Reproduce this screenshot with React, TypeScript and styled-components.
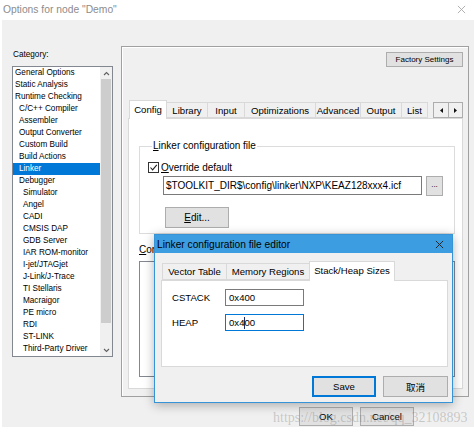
import React from "react";
import styled, { createGlobalStyle } from "styled-components";

const categories: { name: string; level: number }[] = [
  { name: "General Options", level: 0 },
  { name: "Static Analysis", level: 0 },
  { name: "Runtime Checking", level: 0 },
  { name: "C/C++ Compiler", level: 1 },
  { name: "Assembler", level: 1 },
  { name: "Output Converter", level: 1 },
  { name: "Custom Build", level: 1 },
  { name: "Build Actions", level: 1 },
  { name: "Linker", level: 1 },
  { name: "Debugger", level: 1 },
  { name: "Simulator", level: 2 },
  { name: "Angel", level: 2 },
  { name: "CADI", level: 2 },
  { name: "CMSIS DAP", level: 2 },
  { name: "GDB Server", level: 2 },
  { name: "IAR ROM-monitor", level: 2 },
  { name: "I-jet/JTAGjet", level: 2 },
  { name: "J-Link/J-Trace", level: 2 },
  { name: "TI Stellaris", level: 2 },
  { name: "Macraigor", level: 2 },
  { name: "PE micro", level: 2 },
  { name: "RDI", level: 2 },
  { name: "ST-LINK", level: 2 },
  { name: "Third-Party Driver", level: 2 },
];

// widths measured off the screenshot (tabs overlap by 1px)
const linkerTabs = [
  { label: "Config", w: 38 },
  { label: "Library", w: 42 },
  { label: "Input", w: 38 },
  { label: "Optimizations", w: 72 },
  { label: "Advanced", w: 46 },
  { label: "Output", w: 42 },
  { label: "List", w: 27 },
];

const editorTabs = [
  { label: "Vector Table", w: 65 },
  { label: "Memory Regions", w: 84 },
  { label: "Stack/Heap Sizes", w: 86 },
];

const CloseIcon = ({ color, size }: { color: string; size: number }) => (
  <svg width={size} height={size} viewBox="0 0 10 10">
    <path d="M1 1 L9 9 M9 1 L1 9" stroke={color} strokeWidth="1" fill="none" />
  </svg>
);

const Chevron = ({ up }: { up?: boolean }) => (
  <svg width="7" height="5" viewBox="0 0 7 5">
    <path
      d={up ? "M1 4 L3.5 1.5 L6 4" : "M1 1 L3.5 3.5 L6 1"}
      stroke="#606060"
      strokeWidth="1.1"
      fill="none"
    />
  </svg>
);

const App = () => {
  return (
    <Screen>
      <GlobalStyle />
      <TitleBar>
        <span>Options for node "Demo"</span>
        <CloseIcon color="#a8a8a8" size={9} />
      </TitleBar>
      <WindowBody>
        <MainRow>
          <LeftColumn>
            <CategoryLabel>Category:</CategoryLabel>
            <CategoryList>
              <Items>
                {categories.map((c) => (
                  <Item key={c.name} $level={c.level} $selected={c.name === "Linker"}>
                    {c.name}
                  </Item>
                ))}
              </Items>
              <ScrollBar>
                <ScrollArrow>
                  <Chevron up />
                </ScrollArrow>
                <Thumb $height={244} />
                <ScrollSpacer />
                <ScrollArrow>
                  <Chevron />
                </ScrollArrow>
              </ScrollBar>
            </CategoryList>
          </LeftColumn>

          <PageFrame>
            <FrameTop>
              <FactoryButton>Factory Settings</FactoryButton>
            </FrameTop>
            <TabStrip $height={18}>
              {linkerTabs.map((t, i) => (
                <Tab key={t.label} $w={t.w} $selected={i === 0} $h={16}>
                  {t.label}
                </Tab>
              ))}
              <Spin>
                <SpinButton>
                  <svg width="3" height="5" viewBox="0 0 3 5">
                    <polygon points="3,0 0,2.5 3,5" fill="#111" />
                  </svg>
                </SpinButton>
                <SpinButton>
                  <svg width="3" height="5" viewBox="0 0 3 5">
                    <polygon points="0,0 3,2.5 0,5" fill="#111" />
                  </svg>
                </SpinButton>
              </Spin>
            </TabStrip>
            <TabPane>
              <Group>
                <legend>
                  <u>L</u>inker configuration file
                </legend>
                <CheckRow>
                  <CheckBox>
                    <svg width="9" height="9" viewBox="0 0 9 9">
                      <path d="M1.5 4.5 L3.6 6.8 L7.8 1.8" stroke="#222" strokeWidth="1.1" fill="none" />
                    </svg>
                  </CheckBox>
                  <span>
                    <u>O</u>verride default
                  </span>
                </CheckRow>
                <PathRow>
                  <PathBox>$TOOLKIT_DIR$\config\linker\NXP\KEAZ128xxx4.icf</PathBox>
                  <DotsButton>...</DotsButton>
                </PathRow>
                <EditButton>
                  <u>E</u>dit...
                </EditButton>
              </Group>
              <SymbolLabel>
                <u>C</u>onfiguration file symbol definitions:
              </SymbolLabel>
              <SymbolList />
            </TabPane>
          </PageFrame>
        </MainRow>

        <BottomButtons>
          <PushButton $w={54} $h={19}>OK</PushButton>
          <PushButton $w={54} $h={19}>Cancel</PushButton>
        </BottomButtons>

        <EditorDialog>
          <DialogTitle>
            <span>Linker configuration file editor</span>
            <CloseIcon color="#1a1a1a" size={9} />
          </DialogTitle>
          <DialogBody>
            <TabStrip $height={18} $pad={2}>
              {editorTabs.map((t, i) => (
                <Tab key={t.label} $w={t.w} $selected={i === 2} $h={17}>
                  {t.label}
                </Tab>
              ))}
            </TabStrip>
            <SizesPane>
              <FieldRow>
                <FieldLabel>CSTACK</FieldLabel>
                <FieldInput>0x400</FieldInput>
              </FieldRow>
              <FieldRow>
                <FieldLabel>HEAP</FieldLabel>
                <FieldInput $focused>
                  0x4<IBeam />00
                </FieldInput>
              </FieldRow>
            </SizesPane>
            <DialogButtons>
              <PushButton $w={64} $h={21} $default>
                Save
              </PushButton>
              <PushButton $w={65} $h={21}>
                取消
              </PushButton>
            </DialogButtons>
          </DialogBody>
        </EditorDialog>
      </WindowBody>
      <Watermark>https://blog.csdn.net/qq_32108893</Watermark>
    </Screen>
  );
};

const GlobalStyle = createGlobalStyle`
  html, body {
    margin: 0;
    padding: 0;
    background: #fff;
  }
  body {
    font-family: "Liberation Sans", Arial, "Noto Sans CJK SC", sans-serif;
    color: #000;
  }
  * {
    box-sizing: border-box;
  }
`;

const Screen = styled.div`
  position: relative;
  width: 474px;
  height: 432px;
  overflow: hidden;
  background: #fff;
`;

const TitleBar = styled.div`
  height: 20px;
  display: flex;
  align-items: center;
  justify-content: space-between;
  padding: 0 8px 1px 3px;
  font-size: 10.3px;
  color: #8c8c8c;
`;

const WindowBody = styled.div`
  position: relative;
  margin-left: 2px;
  height: 407px;
  background: #f0f0f0;
`;

const MainRow = styled.div`
  display: flex;
  align-items: flex-start;
  gap: 8px;
  padding: 26px 5px 0 10px;
`;

const LeftColumn = styled.div`
  width: 101px;
  display: flex;
  flex-direction: column;
`;

const CategoryLabel = styled.div`
  font-size: 8.2px;
  line-height: 14px;
  margin: 2px 0 4px 1px;
`;

const CategoryList = styled.div`
  height: 291px;
  display: flex;
  background: #fff;
  border: 1px solid #828790;
`;

const Items = styled.div`
  flex: 1;
  display: flex;
  flex-direction: column;
`;

const Item = styled.div<{ $level: number; $selected?: boolean }>`
  height: 12px;
  line-height: 12px;
  font-size: 8.2px;
  white-space: nowrap;
  padding-left: ${(p) => 2 + p.$level * 4}px;
  background: ${(p) => (p.$selected ? "#0078d7" : "transparent")};
  color: ${(p) => (p.$selected ? "#fff" : "#000")};
`;

const ScrollBar = styled.div`
  width: 12px;
  display: flex;
  flex-direction: column;
  background: #f0f0f0;
`;

const ScrollArrow = styled.div`
  height: 12px;
  display: flex;
  align-items: center;
  justify-content: center;
`;

const Thumb = styled.div<{ $height: number }>`
  height: ${(p) => p.$height}px;
  margin: 0 1px;
  background: #cdcdcd;
`;

const ScrollSpacer = styled.div`
  flex: 1;
`;

const PageFrame = styled.div`
  width: 348px;
  height: 351px;
  display: flex;
  flex-direction: column;
  padding: 5px 5px 7px 6px;
  border: 1px solid #a0a0a0;
  box-shadow: inset 1px 1px 0 #fff;
`;

const FrameTop = styled.div`
  display: flex;
  justify-content: flex-end;
`;

const FactoryButton = styled.div`
  width: 77px;
  height: 15px;
  display: flex;
  align-items: center;
  justify-content: center;
  font-size: 8px;
  background: #e1e1e1;
  border: 1px solid #adadad;
`;

const TabStrip = styled.div<{ $height: number; $pad?: number }>`
  height: ${(p) => p.$height}px;
  display: flex;
  align-items: flex-end;
  padding-left: ${(p) => p.$pad ?? 2}px;
  margin-top: ${(p) => (p.$pad === undefined ? 33 : 0)}px;
`;

const Tab = styled.div<{ $w: number; $h: number; $selected?: boolean }>`
  position: relative;
  width: ${(p) => p.$w}px;
  height: ${(p) => (p.$selected ? p.$h + 3 : p.$h)}px;
  margin-left: -1px;
  margin-bottom: ${(p) => (p.$selected ? -1 : 0)}px;
  padding-bottom: ${(p) => (p.$selected ? 2 : 0)}px;
  display: flex;
  align-items: center;
  justify-content: center;
  font-size: 9.6px;
  white-space: nowrap;
  background: ${(p) => (p.$selected ? "#fff" : "#f0f0f0")};
  border: 1px solid #d9d9d9;
  border-bottom: ${(p) => (p.$selected ? "none" : "1px solid #d9d9d9")};
  z-index: ${(p) => (p.$selected ? 1 : 0)};
`;

const Spin = styled.div`
  margin-left: auto;
  align-self: flex-start;
  margin-top: 2px;
  display: flex;
  border: 1px solid #adadad;
  background: #f0f0f0;
`;

const SpinButton = styled.div`
  width: 14px;
  height: 14px;
  display: flex;
  align-items: center;
  justify-content: center;
  & + & {
    border-left: 1px solid #adadad;
  }
`;

const TabPane = styled.div`
  flex: 1;
  display: flex;
  flex-direction: column;
  padding: 21px 7px 11px 10px;
  background: #fff;
  border: 1px solid #d9d9d9;
`;

const Group = styled.fieldset`
  margin: 0;
  padding: 9px 8px 5px 8px;
  border: 1px solid #dcdcdc;
  font-size: 10px;

  legend {
    margin-left: 4px;
    padding: 0 1px;
    line-height: 12px;
    font-size: 10px;
  }
`;

const CheckRow = styled.div`
  height: 13px;
  display: flex;
  align-items: center;
  gap: 2px;
  font-size: 10px;
`;

const CheckBox = styled.div`
  width: 11px;
  height: 11px;
  display: flex;
  align-items: center;
  justify-content: center;
  border: 1px solid #333;
  background: #fff;
`;

const PathRow = styled.div`
  display: flex;
  align-items: flex-start;
  gap: 4px;
  margin: 2px 0 0 15px;
`;

const PathBox = styled.div`
  width: 259px;
  height: 19px;
  display: flex;
  align-items: center;
  padding-left: 2px;
  font-size: 10px;
  white-space: nowrap;
  overflow: hidden;
  border: 1px solid #7a7a7a;
  background: #fff;
`;

const DotsButton = styled.div`
  width: 17px;
  height: 20px;
  display: flex;
  align-items: center;
  justify-content: center;
  padding-bottom: 3px;
  font-size: 8px;
  background: #e1e1e1;
  border: 1px solid #adadad;
`;

const EditButton = styled.div`
  width: 64px;
  height: 21px;
  margin: 11px 0 0 17px;
  display: flex;
  align-items: center;
  justify-content: center;
  font-size: 10px;
  background: #e1e1e1;
  border: 1px solid #adadad;
`;

const SymbolLabel = styled.div`
  margin-top: 10px;
  line-height: 12px;
  font-size: 10px;
  white-space: nowrap;
`;

const SymbolList = styled.div`
  flex: 1;
  margin-top: 5px;
  background: #fff;
  border: 1px solid #828790;
`;

const BottomButtons = styled.div`
  display: flex;
  justify-content: flex-end;
  gap: 7px;
  margin-top: 10px;
  padding-right: 60px;
`;

const PushButton = styled.div<{ $w: number; $h: number; $default?: boolean }>`
  width: ${(p) => p.$w}px;
  height: ${(p) => p.$h}px;
  display: flex;
  align-items: center;
  justify-content: center;
  font-size: 9.6px;
  background: #e1e1e1;
  border: 1px solid ${(p) => (p.$default ? "#0078d7" : "#adadad")};
  box-shadow: ${(p) => (p.$default ? "inset 0 0 0 1px #0078d7" : "none")};
`;

const EditorDialog = styled.div`
  position: absolute;
  left: 152px;
  top: 214px;
  width: 299px;
  display: flex;
  flex-direction: column;
  background: #f0f0f0;
  border: 1px solid #3593d6;
  box-shadow: 0 2px 10px rgba(0, 0, 0, 0.3);
`;

const DialogTitle = styled.div`
  height: 18px;
  display: flex;
  align-items: center;
  justify-content: space-between;
  padding: 0 8px 0 2px;
  font-size: 10.2px;
  color: #000;
  background: #3c9ee0;
`;

const DialogBody = styled.div`
  display: flex;
  flex-direction: column;
  padding: 9px 4px 5px 6px;
`;

const SizesPane = styled.div`
  height: 87px;
  display: flex;
  flex-direction: column;
  gap: 8px;
  padding: 8px 0 0 10px;
  background: #fff;
  border: 1px solid #d9d9d9;
`;

const FieldRow = styled.div`
  display: flex;
  align-items: center;
`;

const FieldLabel = styled.div`
  width: 53px;
  font-size: 9.6px;
`;

const FieldInput = styled.div<{ $focused?: boolean }>`
  width: 79px;
  height: 17px;
  display: flex;
  align-items: center;
  padding-left: 3px;
  font-size: 9.6px;
  background: #fff;
  border: 1px solid ${(p) => (p.$focused ? "#0078d7" : "#7a7a7a")};
`;

const IBeam = styled.span`
  display: inline-block;
  width: 1px;
  height: 12px;
  margin: 0 -0.5px;
  background: #1c2a6a;
`;

const DialogButtons = styled.div`
  display: flex;
  justify-content: flex-end;
  gap: 7px;
  margin-top: 9px;
`;

const Watermark = styled.div`
  position: absolute;
  left: 273px;
  top: 410px;
  font-family: "Liberation Serif", "Times New Roman", serif;
  font-size: 14px;
  color: rgba(120, 120, 120, 0.35);
  white-space: nowrap;
  pointer-events: none;
`;

export default App;
